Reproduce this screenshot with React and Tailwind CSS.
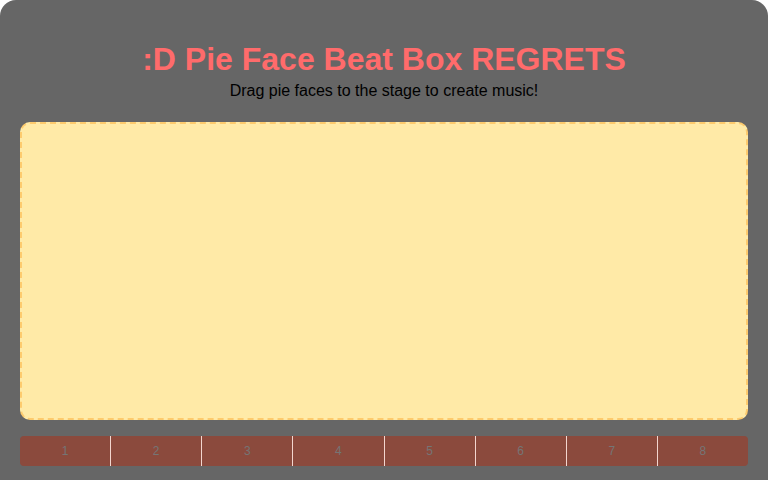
export default function App() {
  const beats = [1, 2, 3, 4, 5, 6, 7, 8];

  return (
    <div className="min-h-[480px] bg-white font-['Liberation_Sans',Arial,sans-serif]">
      <div className="min-h-[480px] rounded-t-[16px] bg-[#666666] px-5 pt-[41px]">
        <h1 className="text-center text-[32px] font-bold leading-[37px] text-[#ff6b6b]">
          :D Pie Face Beat Box REGRETS
        </h1>
        <p className="mt-1 text-center text-base leading-[18px] text-black">
          Drag pie faces to the stage to create music!
        </p>

        {/* Stage */}
        <div className="mt-[22px] h-[298px] rounded-[10px] border-2 border-dashed border-[#fdcb6e] bg-[#ffeaa7]" />

        {/* Timeline */}
        <div className="mt-4 flex h-[30px] rounded-[4px] bg-[#8b4a3d]">
          {beats.map((n) => (
            <div
              key={n}
              className={`flex flex-1 items-center justify-center text-xs text-[#757575] ${n < 8 ? 'border-r border-[#f3d6cf]' : ''}`}
            >
              {n}
            </div>
          ))}
        </div>
      </div>
    </div>
  );
}
